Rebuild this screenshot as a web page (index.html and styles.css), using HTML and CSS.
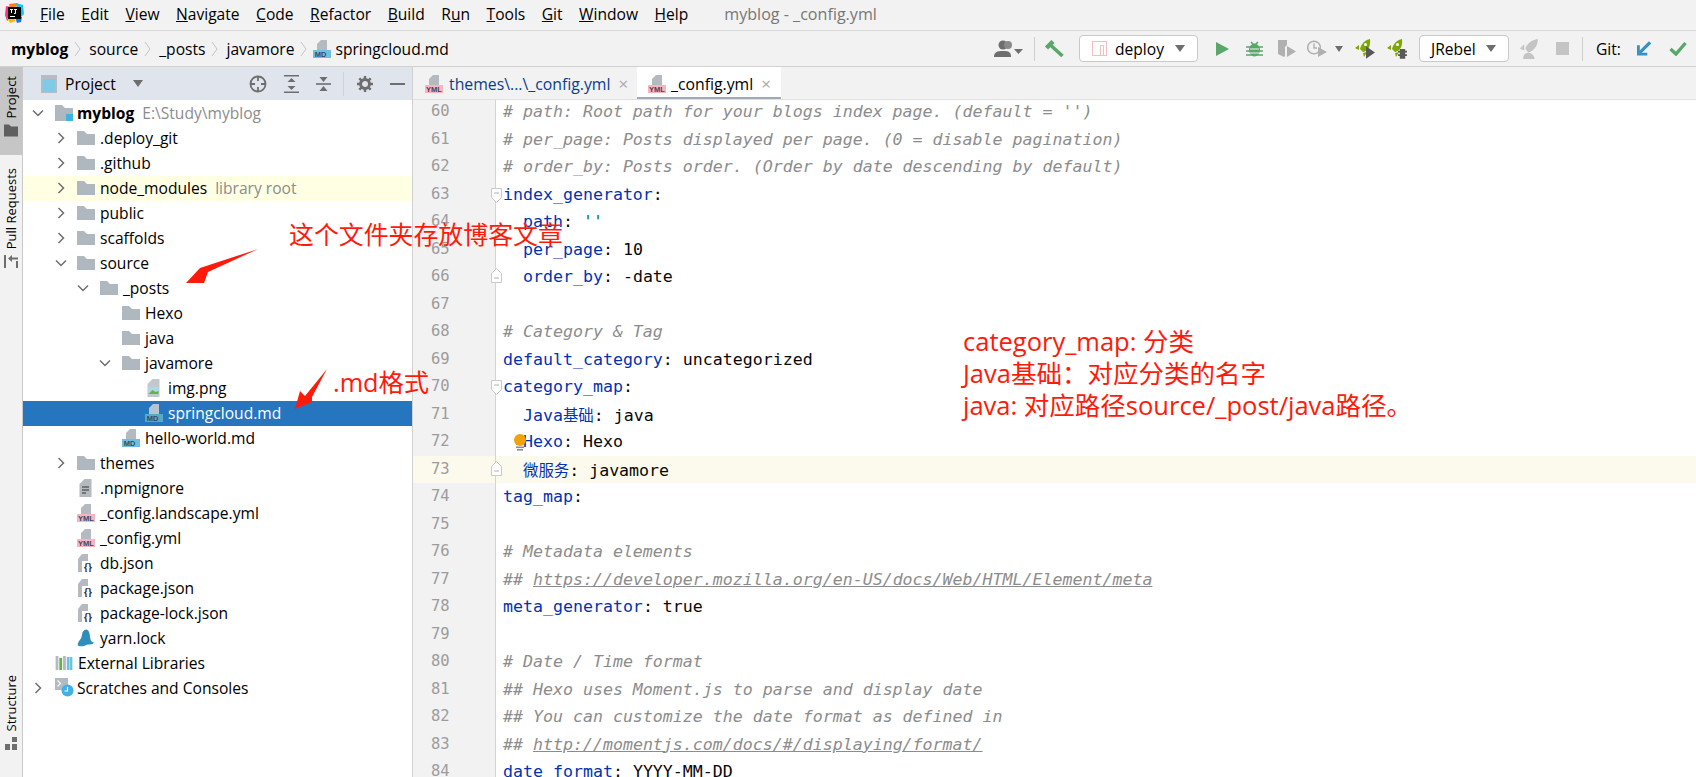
FILE: index.html
```html
<!DOCTYPE html>
<html lang="en">
<head>
<meta charset="utf-8">
<title>myblog - _config.yml</title>
<link rel="stylesheet" href="styles.css">
</head>
<body>
<svg class="defs" aria-hidden="true">
  <symbol id="folder" viewBox="0 0 18 14"><path d="M0 0h7l3 3h8v11H0z" fill="#afb8bf"/></symbol>
  <symbol id="chev-r" viewBox="0 0 12 12"><path d="M3.500 1l5 5-5 5" fill="none" stroke="#6e6e6e" stroke-width="1.500"/></symbol>
  <symbol id="chev-d" viewBox="0 0 12 12"><path d="M1 3.500l5 5 5-5" fill="none" stroke="#6e6e6e" stroke-width="1.500"/></symbol>
  <symbol id="module" viewBox="0 0 18 16"><path d="M0 0h7l3 3h8v6h-7v7H0z" fill="#afb8bf"/><rect x="11" y="9" width="7" height="7" fill="#3fb1e3"/></symbol>
  <symbol id="img" viewBox="0 0 14 18"><path d="M6 0h7v18H1V5z" fill="#c3c8cc"/><rect x="2" y="8" width="10" height="7" fill="#a3dcec"/><path d="M2 15l4-4 3 2 3-1v3z" fill="#62b543"/></symbol>
  <symbol id="txt" viewBox="0 0 14 18"><path d="M6 0h7v18H1V5z" fill="#b4bac0"/><path d="M3.500 8h7M3.500 11h7M3.500 14h4" stroke="#5c6166" stroke-width="1.300"/></symbol>
  <symbol id="yarn" viewBox="0 0 17 17"><path d="M9 0c2 0 3 2 3.500 4 .5 2 .5 4 1 6 .5 2 2 3 3.500 3-1 2-4 2-6 2-3 1-7 3-10 1-1-1 1-5 3-7 1-2 1-6 2-7 .8-1 2-2 3-2z" fill="#2c8ebb"/></symbol>
  <symbol id="libs" viewBox="0 0 18 15"><rect width="3" height="15" x="0" y="0" fill="#b4bac0"/><rect width="3" height="13" x="4" y="2" fill="#62b543"/><rect width="3" height="15" x="8" y="0" fill="#b4bac0"/><rect width="3" height="14" x="12" y="1" fill="#6cc1e3"/><rect width="2.500" height="14" x="15.500" y="1" fill="#6cc1e3"/></symbol>
  <symbol id="scratch" viewBox="0 0 19 19"><rect width="13" height="12" fill="#b4bac0"/><path d="M2.500 2.500l3 3-3 3" fill="none" stroke="#fff" stroke-width="1.200"/><circle cx="12.500" cy="12.500" r="6" fill="#3fb1e3"/><path d="M12.500 9v4h-3" fill="none" stroke="#fff" stroke-width="1.200"/></symbol>
  <symbol id="rocket" viewBox="0 0 19 19"><path d="M15 0c-5 1-9 5-10 10l3 3c5-1 8-6 7-13z" fill="#7ea800"/><path d="M4 6L0 9l4 2zM8 14l1 4 3-5z" fill="#7ea800"/><circle cx="10.500" cy="5.500" r="1.500" fill="#fff"/></symbol>
  <symbol id="rocket-g" viewBox="0 0 19 19"><path d="M17 0C11 1 7 4 5 9l3 4c5-2 9-6 9-13z" fill="#c4c4c4"/><path d="M4 5L0 9l4 2zM3 19c0-4 2-6 5-6s5 2 6 6z" fill="#c4c4c4"/></symbol>
  <symbol id="fold-s" viewBox="0 0 11 15"><path d="M.5.500h10v9l-5 5-5-5z" fill="#fff" stroke="#c9c9c9"/><path d="M3 5h5" stroke="#b0b0b0"/></symbol>
  <symbol id="fold-e" viewBox="0 0 11 15"><path d="M.5 14.500h10v-9l-5-5-5 5z" fill="#fff" stroke="#c9c9c9"/><path d="M3 10h5" stroke="#b0b0b0"/></symbol>
</svg>

<div class="app">
  <header class="menubar">
    <svg class="logo" viewBox="0 0 19 20"><path d="M4 1l8-1 2 3-9 2z" fill="#fd7d1a"/><path d="M11 0l7 2 1 9-4 4z" fill="#19c3f3"/><path d="M1 3l5 1-1 11-3 3-2-6z" fill="#ff318c"/><path d="M2 15l5-1 4 4-6 2z" fill="#fdb60d"/><path d="M10 14h7l-1 5-4 1z" fill="#087cfa"/><rect x="3" y="4" width="13" height="12" fill="#000"/><rect x="5" y="13" width="5" height="1" fill="#fff"/><path d="M5 6h3v1H7v3H6V7H5zM9 6h3v1h-1v3c0 .6-.5 1-2 1v-1c.7 0 1 0 1-.5V7H9z" fill="#fff"/></svg>
    <nav class="menu">
      <span><u>F</u>ile</span><span><u>E</u>dit</span><span><u>V</u>iew</span><span><u>N</u>avigate</span><span><u>C</u>ode</span><span><u>R</u>efactor</span><span><u>B</u>uild</span><span>R<u>u</u>n</span><span><u>T</u>ools</span><span><u>G</u>it</span><span><u>W</u>indow</span><span><u>H</u>elp</span>
    </nav>
    <span class="wintitle">myblog - _config.yml</span>
  </header>

  <div class="navbar">
    <div class="crumbs">
      <b>myblog</b><svg class="crumb-sep" viewBox="0 0 7 16"><path d="M1 1l5 7-5 7" fill="none" stroke="#c4c4c4"/></svg>
      <span>source</span><svg class="crumb-sep" viewBox="0 0 7 16"><path d="M1 1l5 7-5 7" fill="none" stroke="#c4c4c4"/></svg>
      <span>_posts</span><svg class="crumb-sep" viewBox="0 0 7 16"><path d="M1 1l5 7-5 7" fill="none" stroke="#c4c4c4"/></svg>
      <span>javamore</span><svg class="crumb-sep" viewBox="0 0 7 16"><path d="M1 1l5 7-5 7" fill="none" stroke="#c4c4c4"/></svg>
      <svg class="ti ti-y" viewBox="0 0 18 20"><path d="M8 2h6v11H4V6z" fill="#b4bac0"/><rect y="12" width="18" height="8" fill="#6cc1e3"/><text x="7.500" y="19" class="ico-t">MD</text></svg><span class="crumb-file">springcloud.md</span>
    </div>
    <div class="tools">
      <svg class="t-user" viewBox="0 0 31 18"><circle cx="10" cy="5" r="4.500" fill="#6e6e6e"/><circle cx="15" cy="5" r="4" fill="#8a8a8a"/><path d="M1 17c0-5 3-6 9-6s8 1 8 6z" fill="#6e6e6e"/><path d="M21 9h9l-4.500 5z" fill="#6e6e6e"/></svg>
      <i class="sep s10"></i>
      <svg class="t-hammer s9" viewBox="0 0 19 17"><path d="M1.500 8L8 1.500" fill="none" stroke="#59a869" stroke-width="4.500"/><path d="M6 5.500L17.500 16" fill="none" stroke="#59a869" stroke-width="3.600"/></svg>
      <div class="combo c-deploy s14"><svg class="c-ico" viewBox="0 0 15 15"><rect x=".5" y=".5" width="14" height="14" fill="none" stroke="#f4bcbc"/><path d="M8.500 14V4.500h3V14" fill="none" stroke="#f4bcbc"/></svg><span>deploy</span><i class="tri"></i></div>
      <svg class="t-run s18" viewBox="0 0 13 14"><path d="M0 0l13 7-13 7z" fill="#59a869"/></svg>
      <svg class="t-debug s17" viewBox="0 0 17 17"><ellipse cx="8.500" cy="10" rx="5.500" ry="6.500" fill="#59a869"/><path d="M5 2l3 3M12 2L9 5M0 7h17M0 11h17M0 15h17" stroke="#59a869" stroke-width="1.600"/><path d="M4 9h9M4 13h9" stroke="#f2f2f2" stroke-width="1.100"/></svg>
      <svg class="t-cov s13" viewBox="0 0 20 17"><path d="M2 0h9v5L9 7v9l-1 1-6-3z" fill="#b0b0b0"/><path d="M11 6l9 5.500-9 5.500z" fill="#b0b0b0"/></svg>
      <svg class="t-cov s11" viewBox="0 0 20 17"><circle cx="7" cy="7.500" r="6.300" fill="none" stroke="#b0b0b0" stroke-width="1.500"/><path d="M7 3.500v4.500h3" fill="none" stroke="#b0b0b0" stroke-width="1.400"/><path d="M11 7l9 5-9 5z" fill="#b0b0b0"/></svg>
      <i class="tri small s8"></i>
      <span class="t-rock s12"><svg><use href="#rocket"/></svg><svg class="badge" viewBox="0 0 10 14"><path d="M0 0l10 7-10 7z" fill="#595959"/></svg></span>
      <span class="t-rock s12"><svg><use href="#rocket"/></svg><svg class="badge" viewBox="0 0 10 14"><path d="M2 3h6v2h2v2H8v2h2v2H8v3H2v-3H0V9h2V7H0V5h2z" fill="#595959"/></svg></span>
      <div class="combo c-rebel s12"><span>JRebel</span><i class="tri"></i></div>
      <svg class="t-rockg s11"><use href="#rocket-g"/></svg>
      <i class="stop s16"></i>
      <i class="sep s13"></i>
      <span class="git s13">Git:</span>
      <svg class="t-upd s17" viewBox="0 0 15 15"><path d="M14 1L3 12" fill="none" stroke="#3592c4" stroke-width="3.400"/><path d="M1.500 4v9.500H11" fill="none" stroke="#3592c4" stroke-width="3"/></svg>
      <svg class="t-chk s18" viewBox="0 0 18 15"><path d="M1.500 8l5.500 5L16.500 2" fill="none" stroke="#59a869" stroke-width="3.400"/></svg>
    </div>
  </div>

  <main class="main">
    <aside class="strip">
      <div class="strip-btn on"><span class="vtext">Project</span><svg class="strip-ico" viewBox="0 0 14 12"><path d="M0 0h5l2 2h7v10H0z" fill="#5f5f5f"/></svg></div>
      <div class="strip-btn"><span class="vtext">Pull Requests</span><svg class="strip-ico" viewBox="0 0 14 13"><path d="M0 0h2v13H0zM12 6h2v7h-2zM8 0l-4 3.500L8 7V4.500h6v-2H8z" fill="#6e6e6e"/></svg></div>
      <div class="strip-space"></div>
      <div class="strip-btn"><span class="vtext">Structure</span><svg class="strip-ico" viewBox="0 0 14 13"><path d="M8 0h5v5H8zM1 7h5v6H1zM8 7h5v6H8z" fill="#6e6e6e"/></svg></div>
    </aside>

    <section class="project">
      <div class="phead">
        <svg class="p-ico" viewBox="0 0 16 18"><rect width="16" height="18" fill="#b8bcc2"/><rect x="1.500" y="4" width="13" height="12.500" fill="#7ecbe8"/></svg>
        <span class="p-title">Project</span>
        <i class="tri"></i>
        <svg class="p-target" viewBox="0 0 18 18"><circle cx="9" cy="9" r="7.500" fill="none" stroke="#6e6e6e" stroke-width="1.800"/><path d="M9 1v5M9 12v5M1 9h5M12 9h5" stroke="#6e6e6e" stroke-width="1.800"/></svg>
        <svg class="p-exp" viewBox="0 0 15 18"><path d="M0 .8h15M0 17.200h15" stroke="#6e6e6e" stroke-width="1.600"/><path d="M7.500 3l4 4h-8zM7.500 15l4-4h-8z" fill="#6e6e6e"/></svg>
        <svg class="p-col" viewBox="0 0 17 18"><path d="M1 9h15" stroke="#6e6e6e" stroke-width="1.600"/><path d="M8.500 7l4-5h-8zM8.500 11l4 5h-8z" fill="#6e6e6e"/></svg>
        <i class="p-sep"></i>
        <svg class="p-gear" viewBox="0 0 16 16"><circle cx="8" cy="8" r="4.500" fill="none" stroke="#6e6e6e" stroke-width="3"/><path d="M8 0v3M8 13v3M0 8h3M13 8h3M2.300 2.300l2.100 2.100M11.600 11.600l2.100 2.100M2.300 13.700l2.100-2.100M11.600 4.400l2.100-2.100" stroke="#6e6e6e" stroke-width="2.400"/></svg>
        <i class="p-min"></i>
      </div>
      <div class="tree">
        <div class="row d0"><svg class="chev"><use href="#chev-d"/></svg><svg class="ti ti-mod"><use href="#module"/></svg><b>myblog</b><em>E:\Study\myblog</em></div>
        <div class="row d1"><svg class="chev"><use href="#chev-r"/></svg><svg class="ti ti-f"><use href="#folder"/></svg><span>.deploy_git</span></div>
        <div class="row d1"><svg class="chev"><use href="#chev-r"/></svg><svg class="ti ti-f"><use href="#folder"/></svg><span>.github</span></div>
        <div class="row d1 lib"><svg class="chev"><use href="#chev-r"/></svg><svg class="ti ti-f"><use href="#folder"/></svg><span>node_modules</span><em>library root</em></div>
        <div class="row d1"><svg class="chev"><use href="#chev-r"/></svg><svg class="ti ti-f"><use href="#folder"/></svg><span>public</span></div>
        <div class="row d1"><svg class="chev"><use href="#chev-r"/></svg><svg class="ti ti-f"><use href="#folder"/></svg><span>scaffolds</span></div>
        <div class="row d1"><svg class="chev"><use href="#chev-d"/></svg><svg class="ti ti-f"><use href="#folder"/></svg><span>source</span></div>
        <div class="row d2"><svg class="chev"><use href="#chev-d"/></svg><svg class="ti ti-f"><use href="#folder"/></svg><span>_posts</span></div>
        <div class="row d3"><svg class="ti ti-f"><use href="#folder"/></svg><span>Hexo</span></div>
        <div class="row d3"><svg class="ti ti-f"><use href="#folder"/></svg><span>java</span></div>
        <div class="row d3"><svg class="chev"><use href="#chev-d"/></svg><svg class="ti ti-f"><use href="#folder"/></svg><span>javamore</span></div>
        <div class="row d4"><svg class="ti ti-s"><use href="#img"/></svg><span>img.png</span></div>
        <div class="row d4 sel"><svg class="ti ti-y" viewBox="0 0 18 20"><path d="M8 2h6v11H4V6z" fill="#b4c4d4"/><rect y="12" width="18" height="8" fill="#58a8c8"/><text x="7.500" y="19" class="ico-t">MD</text></svg><span>springcloud.md</span></div>
        <div class="row d3"><svg class="ti ti-y" viewBox="0 0 18 20"><path d="M8 2h6v11H4V6z" fill="#b4bac0"/><rect y="12" width="18" height="8" fill="#6cc1e3"/><text x="7.500" y="19" class="ico-t">MD</text></svg><span>hello-world.md</span></div>
        <div class="row d1"><svg class="chev"><use href="#chev-r"/></svg><svg class="ti ti-f"><use href="#folder"/></svg><span>themes</span></div>
        <div class="row d1"><svg class="ti ti-s"><use href="#txt"/></svg><span>.npmignore</span></div>
        <div class="row d1"><svg class="ti ti-y" viewBox="0 0 18 20"><path d="M8 2h6v11H4V6z" fill="#b4bac0"/><rect y="12" width="18" height="8" fill="#f7b4c2"/><text x="9" y="19" class="ico-t">YML</text></svg><span>_config.landscape.yml</span></div>
        <div class="row d1"><svg class="ti ti-y" viewBox="0 0 18 20"><path d="M8 2h6v11H4V6z" fill="#b4bac0"/><rect y="12" width="18" height="8" fill="#f7b4c2"/><text x="9" y="19" class="ico-t">YML</text></svg><span>_config.yml</span></div>
        <div class="row d1"><svg class="ti ti-s" viewBox="0 0 17 18"><path d="M5 0h6v18H1V5z" fill="#b4bac0"/><rect x="5" y="7" width="12" height="11" fill="#fff"/><text x="11" y="16.500" class="ico-j">{}</text></svg><span>db.json</span></div>
        <div class="row d1"><svg class="ti ti-s" viewBox="0 0 17 18"><path d="M5 0h6v18H1V5z" fill="#b4bac0"/><rect x="5" y="7" width="12" height="11" fill="#fff"/><text x="11" y="16.500" class="ico-j">{}</text></svg><span>package.json</span></div>
        <div class="row d1"><svg class="ti ti-s" viewBox="0 0 17 18"><path d="M5 0h6v18H1V5z" fill="#b4bac0"/><rect x="5" y="7" width="12" height="11" fill="#fff"/><text x="11" y="16.500" class="ico-j">{}</text></svg><span>package-lock.json</span></div>
        <div class="row d1"><svg class="ti ti-s"><use href="#yarn"/></svg><span>yarn.lock</span></div>
        <div class="row d0"><svg class="ti ti-f"><use href="#libs"/></svg><span>External Libraries</span></div>
        <div class="row d0"><svg class="chev"><use href="#chev-r"/></svg><svg class="ti ti-sc"><use href="#scratch"/></svg><span>Scratches and Consoles</span></div>
      </div>
    </section>

    <section class="editor">
      <div class="tabs">
        <div class="tab"><svg class="ti ti-y" viewBox="0 0 18 20"><path d="M8 2h6v11H4V6z" fill="#b4bac0"/><rect y="12" width="18" height="8" fill="#f7b4c2"/><text x="9" y="19" class="ico-t">YML</text></svg><span class="mod">themes\...\_config.yml</span><span class="x">×</span></div>
        <div class="tab on"><svg class="ti ti-y" viewBox="0 0 18 20"><path d="M8 2h6v11H4V6z" fill="#b4bac0"/><rect y="12" width="18" height="8" fill="#f7b4c2"/><text x="9" y="19" class="ico-t">YML</text></svg><span>_config.yml</span><span class="x">×</span></div>
      </div>
      <div class="code">
        <div class="ln"><i>60</i><code class="c"># path: Root path for your blogs index page. (default = '')</code></div>
        <div class="ln"><i>61</i><code class="c"># per_page: Posts displayed per page. (0 = disable pagination)</code></div>
        <div class="ln"><i>62</i><code class="c"># order_by: Posts order. (Order by date descending by default)</code></div>
        <div class="ln"><i>63</i><svg class="fold fs"><use href="#fold-s"/></svg><code><b>index_generator</b>:</code></div>
        <div class="ln"><i>64</i><code>  <b>path</b>: <s>''</s></code></div>
        <div class="ln"><i>65</i><code>  <b>per_page</b>: 10</code></div>
        <div class="ln"><i>66</i><svg class="fold fe"><use href="#fold-e"/></svg><code>  <b>order_by</b>: -date</code></div>
        <div class="ln"><i>67</i><code> </code></div>
        <div class="ln"><i>68</i><code class="c"># Category &amp; Tag</code></div>
        <div class="ln"><i>69</i><code><b>default_category</b>: uncategorized</code></div>
        <div class="ln"><i>70</i><svg class="fold fs"><use href="#fold-s"/></svg><code><b>category_map</b>:</code></div>
        <div class="ln"><i>71</i><code>  <b>Java<span class="cjk">基础</span></b>: java</code></div>
        <div class="ln"><i>72</i><code>  <b>Hexo</b>: Hexo</code><svg class="bulb" viewBox="0 0 12 18"><circle cx="6" cy="6" r="6" fill="#f0a30a"/><rect x="2" y="12.500" width="8" height="1.600" fill="#8c8c8c"/><rect x="3" y="15" width="6" height="1.600" fill="#8c8c8c"/></svg></div>
        <div class="ln cur"><i>73</i><svg class="fold fe"><use href="#fold-e"/></svg><code>  <b><span class="cjk">微服务</span></b>: javamore</code></div>
        <div class="ln"><i>74</i><code><b>tag_map</b>:</code></div>
        <div class="ln"><i>75</i><code> </code></div>
        <div class="ln"><i>76</i><code class="c"># Metadata elements</code></div>
        <div class="ln"><i>77</i><code class="c">## <u>https://developer.mozilla.org/en-US/docs/Web/HTML/Element/meta</u></code></div>
        <div class="ln"><i>78</i><code><b>meta_generator</b>: true</code></div>
        <div class="ln"><i>79</i><code> </code></div>
        <div class="ln"><i>80</i><code class="c"># Date / Time format</code></div>
        <div class="ln"><i>81</i><code class="c">## Hexo uses Moment.js to parse and display date</code></div>
        <div class="ln"><i>82</i><code class="c">## You can customize the date format as defined in</code></div>
        <div class="ln"><i>83</i><code class="c">## <u>http://momentjs.com/docs/#/displaying/format/</u></code></div>
        <div class="ln"><i>84</i><code><b>date_format</b>: YYYY-MM-DD</code></div>
      </div>
    </section>
  </main>

  <div class="note n1">这个文件夹存放博客文章</div>
  <div class="note n2">.md格式</div>
  <div class="note n3">category_map: 分类<br>Java基础：对应分类的名字<br>java: 对应路径source/_post/java路径。</div>
  <svg class="arrows" viewBox="0 0 1696 777">
    <path d="M258 249L208 272 204 283 186 283 200 268 203 267z" fill="#ff1a0a"/>
    <path d="M327 369L312 397 312 402 295 409 300 391 305 396z" fill="#ff1a0a"/>
  </svg>
</div>
</body>
</html>
```

FILE: styles.css
```css
* { box-sizing: border-box; }
html, body { margin: 0; padding: 0; height: 100%; overflow: hidden; background: #f2f2f2; }
body { font-family: "Open Sans", "Noto Sans CJK SC", sans-serif; color: #000; }
.defs { position: absolute; width: 0; height: 0; }
.ico-t { font: bold 7.5px "Liberation Sans", sans-serif; fill: #3c4a55; text-anchor: middle; }
.ico-j { font: bold 10px "Liberation Sans", sans-serif; fill: #333; text-anchor: middle; }
.app { position: relative; width: 1696px; height: 777px; display: flex; flex-direction: column; overflow: hidden; }

/* menu bar */
.menubar { height: 31px; flex: none; display: flex; align-items: center; border-bottom: 1px solid #d9d9d9; padding-left: 5px; font-size: 15.6px; }
.logo { width: 19px; height: 20px; margin-right: 16px; margin-top: -4px; }
.menu { display: flex; gap: 16.5px; margin-top: -2px; }
.wintitle { color: #777; font-size: 16.1px; margin-left: 36px; margin-top: -2px; }

/* navigation bar */
.navbar { height: 36px; flex: none; display: flex; justify-content: space-between; align-items: center; border-bottom: 1px solid #d1d1d1; font-size: 15.6px; }
.crumbs { display: flex; align-items: center; padding-left: 11px; }
.crumb-sep { width: 7px; height: 16px; margin: 0 8px 0 6px; }
.crumbs .ti-y { margin-left: -2px; margin-right: 4px; }
.tools { display: flex; align-items: center; padding-right: 9px; }
.sep { width: 1px; height: 24px; background: #cfcfcf; }
.s8 { margin-left: 8px; } .s9 { margin-left: 9px; } .s10 { margin-left: 10px; } .s11 { margin-left: 11px; }
.s12 { margin-left: 12px; } .s13 { margin-left: 13px; } .s14 { margin-left: 14px; } .s16 { margin-left: 16px; }
.s17 { margin-left: 17px; } .s18 { margin-left: 18px; }
.t-user { width: 31px; height: 18px; }
.t-hammer { width: 21px; height: 17px; }
.combo { height: 27px; display: flex; align-items: center; background: #fff; border: 1px solid #c9c9c9; border-radius: 4px; }
.c-deploy { width: 119px; padding-left: 12px; }
.c-rebel { width: 90px; padding-left: 11px; }
.c-ico { width: 15px; height: 15px; margin-right: 8px; }
.combo .tri { margin-left: auto; margin-right: 12px; }
.tri { display: block; width: 0; height: 0; border-left: 5px solid transparent; border-right: 5px solid transparent; border-top: 7px solid #6e6e6e; }
.tri.small { border-left-width: 4px; border-right-width: 4px; border-top-width: 6px; }
.t-run { width: 13px; height: 14px; }
.t-debug { width: 17px; height: 17px; }
.t-cov { width: 20px; height: 17px; }
.t-rock { position: relative; display: block; width: 20px; height: 20px; }
.t-rock svg { width: 19px; height: 19px; display: block; }
.t-rock .badge { position: absolute; right: 0; bottom: 0; width: 9px; height: 13px; }
.t-rockg { width: 20px; height: 20px; }
.stop { width: 13px; height: 13px; background: #c4c4c4; }
.git { width: 24px; white-space: nowrap; }
.t-upd { width: 14px; height: 15px; }
.t-chk { width: 18px; height: 15px; }

/* main */
.main { flex: 1; min-height: 0; display: flex; }
.strip { width: 23px; flex: none; display: flex; flex-direction: column; border-right: 1px solid #c9c9c9; padding-bottom: 27px; font-size: 13px; }
.strip-btn { display: flex; flex-direction: column; align-items: center; gap: 6px; width: 22px; padding-top: 11px; }
.strip-btn.on { background: #c6c6c6; height: 88px; padding-top: 9px; margin-bottom: 2px; }
.strip-space { flex: 1; }
.vtext { writing-mode: vertical-rl; transform: rotate(180deg); white-space: nowrap; line-height: 22px; }
.strip-ico { width: 14px; height: 13px; flex: none; }

/* project panel */
.project { width: 390px; flex: none; display: flex; flex-direction: column; background: #fff; border-right: 1px solid #d1d1d1; }
.phead { height: 33px; flex: none; display: flex; align-items: center; background: #e0e4ec; font-size: 15.6px; padding-left: 18px; }
.p-ico { width: 16px; height: 18px; }
.p-title { margin-left: 8px; width: 53px; }
.phead .tri { margin-left: 15px; }
.p-target { width: 18px; height: 18px; margin-left: 106px; }
.p-exp { width: 15px; height: 18px; margin-left: 17px; }
.p-col { width: 17px; height: 18px; margin-left: 16px; }
.p-sep { width: 1px; height: 24px; background: #cfd2d8; margin-left: 11px; }
.p-gear { width: 16px; height: 16px; margin-left: 13px; }
.p-min { width: 15px; height: 2px; background: #6e6e6e; margin-left: 17px; }
.tree { flex: 1; padding-top: 1px; font-size: 15.6px; }
.row { position: relative; height: 25px; display: flex; align-items: center; white-space: nowrap; padding-bottom: 2px; }
.row em { font-style: normal; color: #8c8c8c; margin-left: 8px; }
.row b { font-weight: 700; }
.chev { position: absolute; top: 6px; width: 12px; height: 12px; }
.ti { flex: none; }
.ti-f { width: 18px; height: 14px; margin-right: 5px; }
.ti-mod { width: 18px; height: 16px; margin-right: 4px; }
.ti-y { width: 18px; height: 20px; margin-right: 5px; margin-top: -1px; }
.ti-s { width: 17px; height: 18px; margin-right: 6px; }
.ti-sc { width: 19px; height: 19px; margin-right: 3px; }
.d0 { padding-left: 32px; }
.d1 { padding-left: 54px; }
.d2 { padding-left: 77px; }
.d3 { padding-left: 99px; }
.d4 { padding-left: 122px; }
.d0 .chev { left: 9px; }
.d1 .chev { left: 32px; }
.d2 .chev { left: 54px; }
.d3 .chev { left: 76px; }
.lib { background: #ffffe4; }
.sel { background: #2675bf; color: #fff; }

/* editor */
.editor { flex: 1; min-width: 0; display: flex; flex-direction: column; background: #fff; }
.tabs { height: 33px; flex: none; display: flex; background: #f2f2f2; font-size: 15.8px; }
.tab { display: flex; align-items: center; padding-left: 12px; width: 224px; color: #000; }
.tab .mod { color: #0a3d91; margin-left: 1px; }
.tab.on { width: 144px; padding-left: 11px; background: #fff; border-bottom: 3px solid #a0a9bc; padding-top: 3px; }
.x { color: #a8a8a8; margin-left: 8px; font-size: 17px; line-height: 1; }
.code { flex: 1; min-height: 0; overflow: hidden; border-top: 1px solid #e0e0e0; margin-top: -1px; position: relative; }
.ln { position: relative; display: flex; height: 27.5px; line-height: 27.5px; }
.ln:first-child { margin-top: -2px; }
.ln i { flex: none; width: 83px; padding-left: 18px; font: 15.5px/27.5px "DejaVu Sans Mono", monospace; color: #9c9c9c; background: #f2f2f2; border-right: 1px solid #d4d4d4; }
.ln code { display: block; padding-left: 7px; font: 16.6px/27.5px "DejaVu Sans Mono", "Noto Sans CJK SC", monospace; white-space: pre; color: #080808; }
.ln code b { font-weight: 400; color: #0033b3; }
.ln code s { text-decoration: none; color: #067d17; }
.ln code.c { font-style: italic; color: #8c8c8c; }
.cjk { font-family: "Noto Sans CJK SC", sans-serif; font-size: 15.4px; }
.cur { background: #fcfaed; }
.cur i { background: #fcfaed; }
.fold { position: absolute; left: 78px; width: 11px; height: 15px; }
.fs { top: 7px; }
.fe { top: 5px; }
.bulb { position: absolute; left: 101px; top: 6px; width: 12px; height: 18px; }

/* annotations over the screenshot */
.note { position: absolute; color: #ff1a0a; font-family: "Open Sans", "Noto Sans CJK SC", sans-serif; line-height: 32px; white-space: nowrap; }
.n1 { left: 289px; top: 218px; font-size: 24.9px; }
.n2 { left: 333px; top: 366px; font-size: 25.3px; }
.n3 { left: 963px; top: 325px; font-size: 25.5px; }
.arrows { position: absolute; left: 0; top: 0; width: 1696px; height: 777px; pointer-events: none; }
```
